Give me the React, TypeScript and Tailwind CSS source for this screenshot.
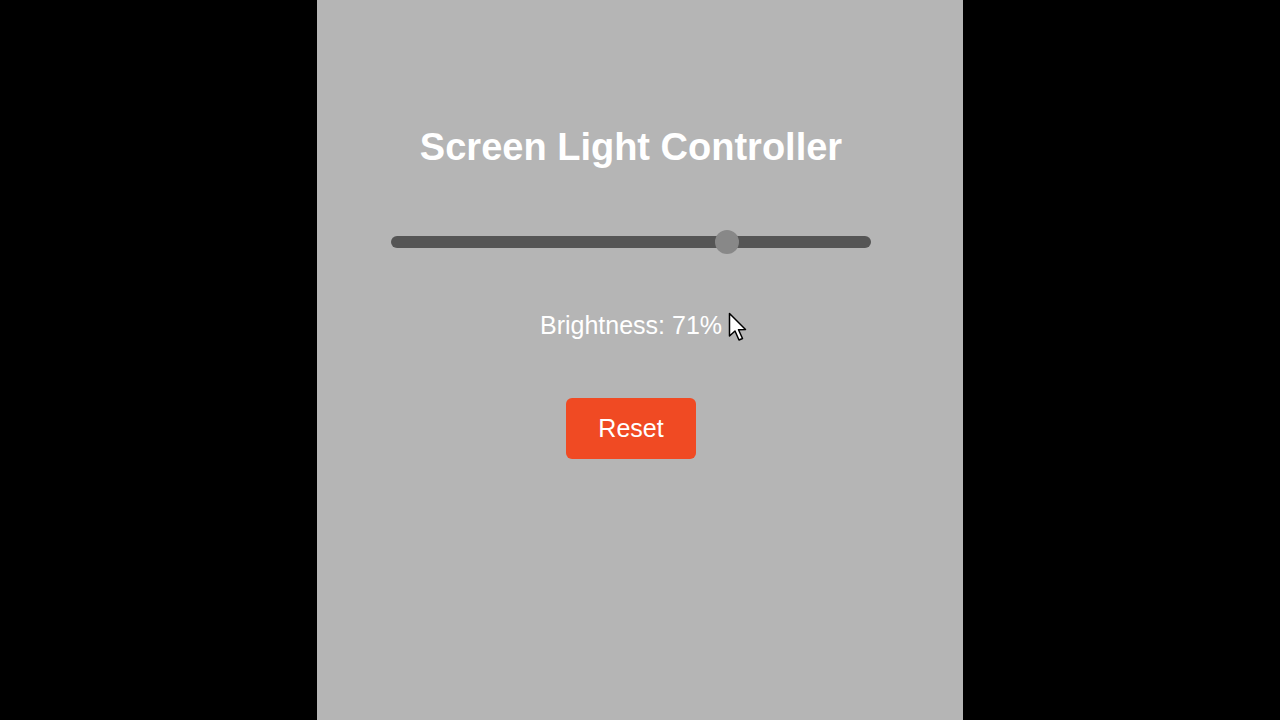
import React, { useState } from "react";

export default function App() {
  const [brightness, setBrightness] = useState(71);

  // thumb is 24px wide, track 480px; native-range style positioning
  const thumbLeft = (brightness / 100) * (480 - 24);

  return (
    <div className="min-h-screen w-full bg-black font-['Liberation_Sans',Arial,sans-serif]">
      <div className="relative mx-auto flex h-screen w-[646px] flex-col items-center bg-[#b5b5b5] pr-[18px] pt-[125px]">
        <h1 className="text-[38px] font-bold leading-[44px] text-white">Screen Light Controller</h1>

        {/* Slider */}
        <div className="relative mt-[61px] h-[24px] w-[480px]">
          <div className="absolute left-0 right-0 top-[6px] h-[12px] rounded-full bg-[#555555]" />
          <div
            className="absolute top-0 h-[24px] w-[24px] rounded-full bg-[#888888]"
            style={{ left: thumbLeft }}
          />
          <input
            type="range"
            min={0}
            max={100}
            value={brightness}
            onChange={(e) => setBrightness(Number(e.target.value))}
            className="absolute inset-0 h-full w-full cursor-pointer opacity-0"
          />
        </div>

        <p className="mt-[56px] text-[25px] leading-[30px] text-white">Brightness: {brightness}%</p>

        <button
          onClick={() => setBrightness(50)}
          className="mt-[58px] h-[61px] w-[130px] rounded-[6px] bg-[#f04a23] text-[25px] text-white"
        >
          Reset
        </button>

        {/* Mouse cursor */}
        <svg
          className="absolute left-[411px] top-[312px]"
          width="22"
          height="32"
          viewBox="0 0 22 32"
        >
          <path
            d="M1.5 1.5 L1.5 24 L7 19 L11 28 L14.5 26.5 L10.5 17.8 L17.5 17.5 Z"
            fill="#ffffff"
            stroke="#000000"
            strokeWidth="1.5"
            strokeLinejoin="round"
          />
        </svg>
      </div>
    </div>
  );
}
